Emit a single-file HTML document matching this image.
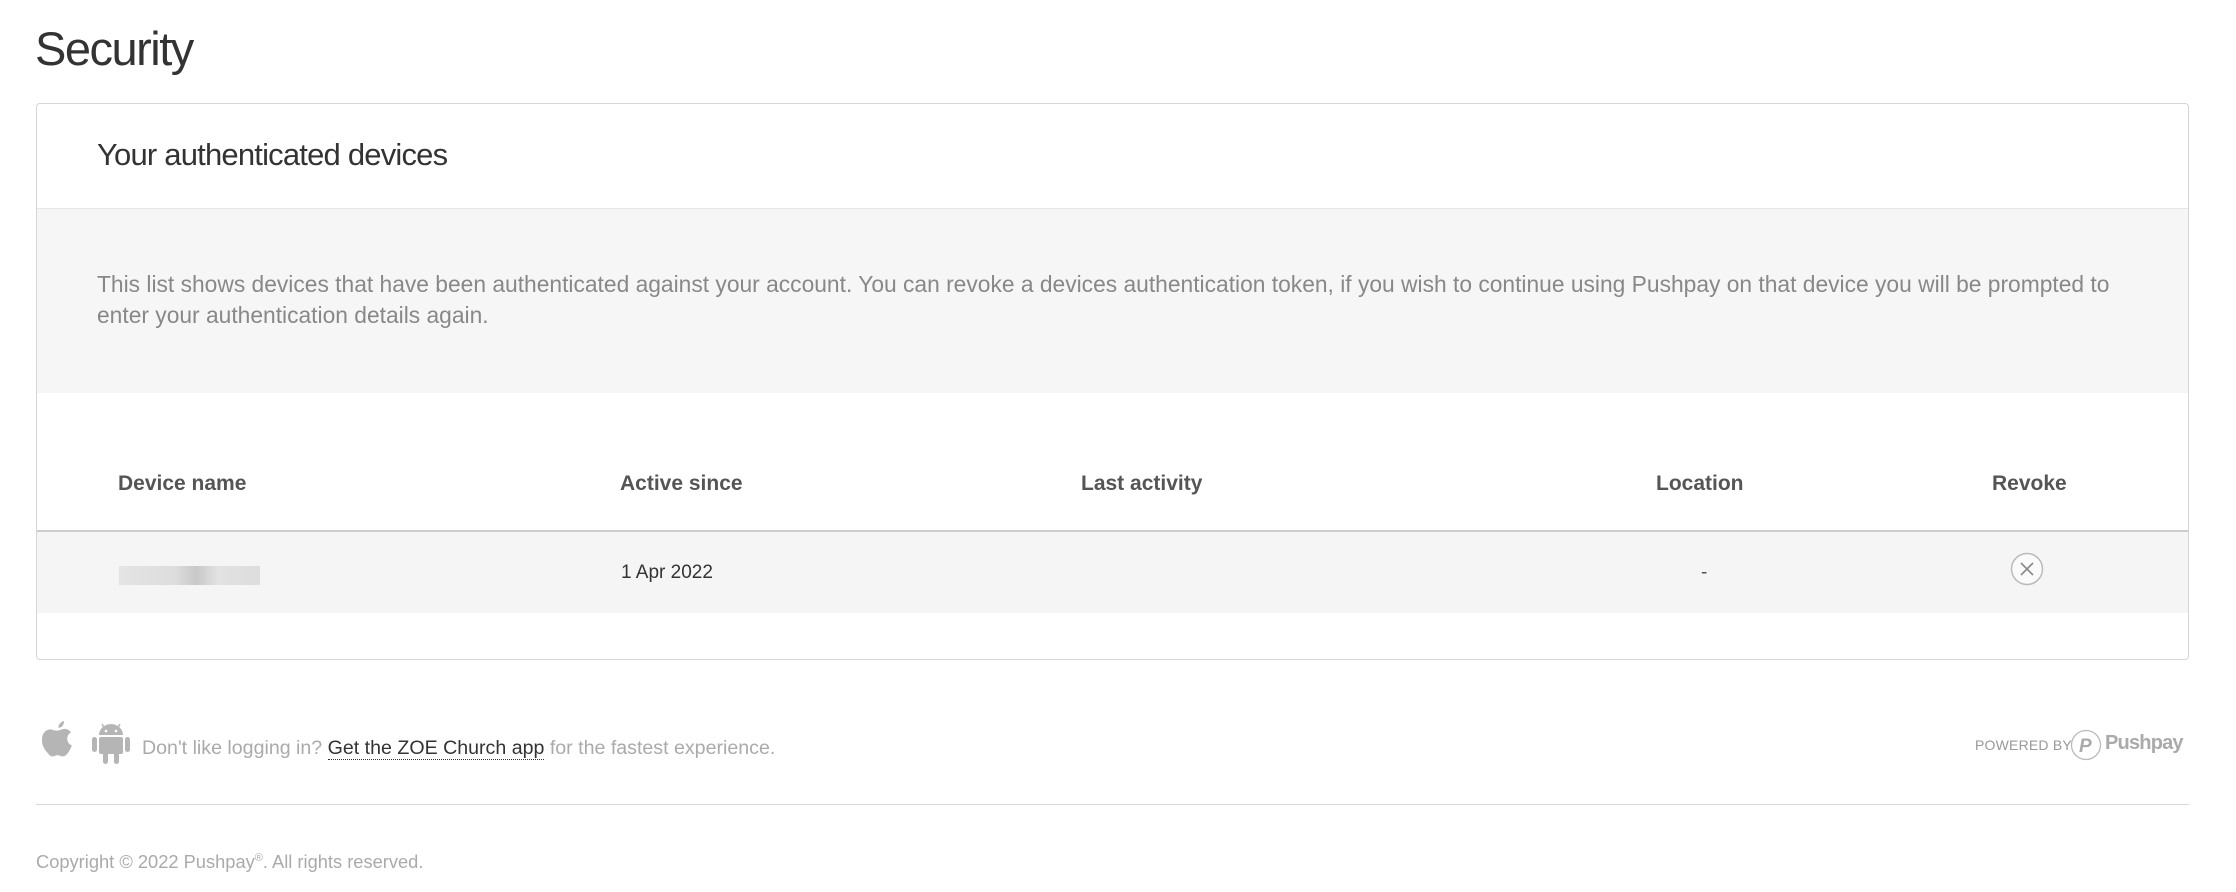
<!DOCTYPE html>
<html><head><meta charset="utf-8"><style>
*{margin:0;padding:0;box-sizing:border-box}
body{width:2236px;height:892px;background:#fff;font-family:"Liberation Sans",Helvetica,Arial,sans-serif;position:relative;overflow:hidden}
.a{position:absolute;white-space:nowrap}
h1{position:absolute;left:35px;top:21px;font-size:47px;font-weight:normal;color:#333;letter-spacing:-1.5px}
.card{position:absolute;left:36px;top:103px;width:2153px;height:557px;border:1.5px solid #d6d6d6;border-radius:4px;overflow:hidden}
.hdr{position:absolute;left:0;top:0;width:100%;height:105px;border-bottom:1px solid #e6e6e6}
.gray{position:absolute;left:0;top:105px;width:100%;height:184px;background:#f6f6f6}
.th{font-size:21px;font-weight:bold;color:#555}
.row{position:absolute;left:0;top:426px;width:100%;height:83px;background:#f5f5f5;border-top:2px solid #ccc}
</style></head><body>
<h1>Security</h1>
<div class="card">
 <div class="hdr"><div class="a" style="left:60px;top:33px;font-size:31px;color:#333;letter-spacing:-0.8px">Your authenticated devices</div></div>
 <div class="gray"><div class="a" style="left:60px;top:60px;font-size:22.8px;color:#888;line-height:31px;white-space:normal;width:2040px">This list shows devices that have been authenticated against your account. You can revoke a devices authentication token, if you wish to continue using Pushpay on that device you will be prompted to enter your authentication details again.</div></div>
 <div class="a th" style="left:81px;top:368px">Device name</div>
 <div class="a th" style="left:583px;top:368px">Active since</div>
 <div class="a th" style="left:1044px;top:368px">Last activity</div>
 <div class="a th" style="left:1619px;top:368px">Location</div>
 <div class="a th" style="left:1955px;top:368px">Revoke</div>
 <div class="row">
  <div class="a" style="left:82px;top:34px;width:141px;height:19px;background:linear-gradient(90deg,#e4e4e4,#ddd 40%,#c8c8c8 55%,#e2e2e2 70%,#ddd)"></div>
  <div class="a" style="left:584px;top:30px;font-size:19px;color:#333">1 Apr 2022</div>
  <div class="a" style="left:1664px;top:30px;font-size:19px;color:#555">-</div>
  <svg class="a" style="left:1973px;top:20px" width="34" height="34" viewBox="0 0 34 34"><circle cx="17" cy="17" r="15.5" fill="#fafafa" stroke="#bbb" stroke-width="1.5"/><path d="M11 11L23 23M23 11L11 23" stroke="#888" stroke-width="1.6"/></svg>
 </div>
</div>
<svg class="a" style="left:40px;top:721px" width="35" height="36" viewBox="0 0 35 36"><path fill="#b5b5b5" d="M24 0c.3 3-1.8 6.5-5.5 7-.4-3 2-6.3 5.5-7zM18 9.5c2 0 4-1.6 6.5-1.6 2.5 0 5 1.3 6.5 3.5-5.5 3-4.6 11 .8 13-1 3-2.5 5.8-4.2 8-1.6 2-3 3-5 3-2 0-2.7-1.2-5-1.2-2.4 0-3.2 1.200-5.2 1.2-2 0-3.5-1.8-5-3.8C3.2 27.6 1.5 22 2 17.3 2.5 12 6 8.5 10 8.4c2.5 0 4.3 1.6 8 1.1z"/></svg>
<svg class="a" style="left:91px;top:721px" width="40" height="43" viewBox="0 0 40 43"><g fill="#b5b5b5"><path d="M8 14a12 11 0 0 1 24 0z"/><path d="M11 3l3 5M29 3l-3 5" stroke="#b5b5b5" stroke-width="1.5"/><rect x="8" y="16" width="24" height="17" rx="2"/><rect x="1" y="16" width="5" height="15" rx="2.5"/><rect x="34" y="16" width="5" height="15" rx="2.5"/><rect x="12" y="30" width="5" height="13" rx="2.5"/><rect x="23" y="30" width="5" height="13" rx="2.5"/></g><circle cx="15" cy="10" r="1.3" fill="#fff"/><circle cx="25" cy="10" r="1.3" fill="#fff"/></svg>
<div class="a" style="left:142px;top:737px;font-size:19.6px;color:#aaa">Don't like logging in? <span style="color:#333;border-bottom:1px dotted #333">Get the ZOE Church app</span> for the fastest experience.</div>
<div class="a" style="left:1975px;top:737px;font-size:14px;color:#999;letter-spacing:0.2px">POWERED BY</div>
<svg class="a" style="left:2070px;top:729px" width="32" height="32" viewBox="0 0 32 32"><circle cx="16" cy="16" r="14.5" fill="none" stroke="#bbb" stroke-width="1.3"/><text x="9" y="23" font-family="Liberation Sans" font-weight="bold" font-style="italic" font-size="19" fill="#aaa">P</text></svg>
<div class="a" style="left:2105px;top:732px;font-size:20px;font-weight:bold;color:#aaa;letter-spacing:-0.8px">Pushpay</div>
<div class="a" style="left:36px;top:804px;width:2153px;height:1px;background:#d8d8d8"></div>
<div class="a" style="left:36px;top:851px;font-size:18.3px;color:#aaa">Copyright © 2022 Pushpay<sup style="font-size:11px">®</sup>. All rights reserved.</div>
</body></html>
